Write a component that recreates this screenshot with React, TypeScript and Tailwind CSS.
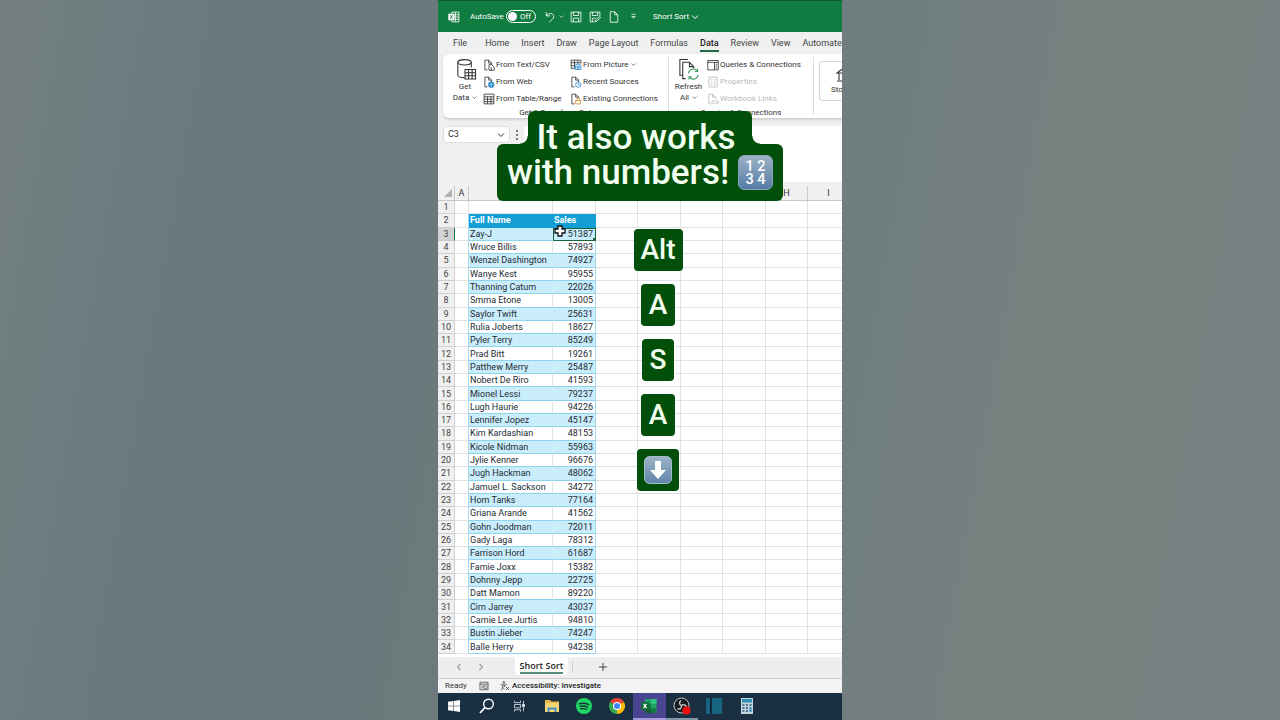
import type { ReactNode } from 'react';
import clsx from 'clsx';

const people: [string, number][] = [
  ['Zay-J', 51387],
  ['Wruce Billis', 57893],
  ['Wenzel Dashington', 74927],
  ['Wanye Kest', 95955],
  ['Thanning Catum', 22026],
  ['Smma Etone', 13005],
  ['Saylor Twift', 25631],
  ['Rulia Joberts', 18627],
  ['Pyler Terry', 85249],
  ['Prad Bitt', 19261],
  ['Patthew Merry', 25487],
  ['Nobert De Riro', 41593],
  ['Mionel Lessi', 79237],
  ['Lugh Haurie', 94226],
  ['Lennifer Jopez', 45147],
  ['Kim Kardashian', 48153],
  ['Kicole Nidman', 55963],
  ['Jylie Kenner', 96676],
  ['Jugh Hackman', 48062],
  ['Jamuel L. Sackson', 34272],
  ['Hom Tanks', 77164],
  ['Griana Arande', 41562],
  ['Gohn Joodman', 72011],
  ['Gady Laga', 78312],
  ['Farrison Hord', 61687],
  ['Famie Joxx', 15382],
  ['Dohnny Jepp', 22725],
  ['Datt Mamon', 89220],
  ['Cim Jarrey', 43037],
  ['Camie Lee Jurtis', 94810],
  ['Bustin Jieber', 74247],
  ['Balle Herry', 94238],
];

const tabs = ['File', 'Home', 'Insert', 'Draw', 'Page Layout', 'Formulas', 'Data', 'Review', 'View', 'Automate'];
const columns = ['A', 'B', 'C', 'D', 'E', 'F', 'G', 'H', 'I'];
const emptyColumns = ['D', 'E', 'F', 'G', 'H', 'I'];

function Svg({ className, box = 16, children }: { className?: string; box?: number; children: ReactNode }) {
  return (
    <svg
      viewBox={`0 0 ${box} ${box}`}
      className={clsx('shrink-0', className)}
      fill="none"
      stroke="currentColor"
      strokeWidth="1.1"
      aria-hidden="true"
    >
      {children}
    </svg>
  );
}

function Chevron({ className }: { className?: string }) {
  return (
    <Svg className={className} box={8}>
      <path d="M1 2.500 4 5.500 7 2.500" strokeWidth="1" />
    </Svg>
  );
}

const page = <path d="M6 14.500H2.500v-13h5l4 4V8M7.500 1.500v4h4" />;

function TextIcon() {
  return (
    <Svg className="size-3">
      {page}
      <path d="M8 7.500h3.500L15 11v4H8zM11 11v4" />
    </Svg>
  );
}

function WebIcon() {
  return (
    <Svg className="size-3">
      {page}
      <circle cx="11" cy="11.500" r="3.800" fill="#2b88c8" stroke="#2b88c8" />
      <path d="M7.500 11.500h7M11 8v7" stroke="#bfe0f5" strokeWidth=".8" />
    </Svg>
  );
}

function TableIcon() {
  return (
    <Svg className="size-3">
      <path d="M1.500 1.500h13v13h-13zM1.500 5h13M1.500 8.300h13M1.500 11.500h13M6 5v9.500M10.500 5v9.500" />
    </Svg>
  );
}

function PictureIcon() {
  return (
    <Svg className="size-3">
      <path d="M6 12.500H1.500v-11h13V6M1.500 5h13M1.500 9H6M6 1.500v11M10.500 1.500V5" />
      <path d="M7 8h1.500l1-1.500h2l1 1.500h2v6H7z" fill="#cbe6f7" stroke="#2b88c8" />
      <circle cx="10.800" cy="11" r="1.400" stroke="#2b88c8" />
    </Svg>
  );
}

function RecentIcon() {
  return (
    <Svg className="size-3">
      {page}
      <circle cx="11" cy="11.500" r="3.600" fill="#fff" stroke="#2b88c8" />
      <path d="M11 9.500v2.300h2" stroke="#2b88c8" />
    </Svg>
  );
}

function ExistingIcon() {
  return (
    <Svg className="size-3">
      {page}
      <path d="M7.500 10h6.500v4.500h-6.500zM9 10V8.500a1.800 1.800 0 0 1 3.600 0V10" fill="#fff" stroke="#c98a2b" />
    </Svg>
  );
}

function QueriesIcon() {
  return (
    <Svg className="size-3">
      <path d="M1 2h14v12.500H1zM1 4.500h14M10 4.500v10" />
      <path d="M11.500 7h2M11.500 9.500h2M11.500 12h2" />
    </Svg>
  );
}

function PropertiesIcon() {
  return (
    <Svg className="size-3">
      <path d="M2.500 1.500h11v13h-11zM5 5h2M5 8h2M5 11h2M9 5h2.500M9 8h2.500M9 11h2.500" />
    </Svg>
  );
}

function LinksIcon() {
  return (
    <Svg className="size-3">
      {page}
      <path d="M10 10H8.500a2 2 0 0 0 0 4H10M12 10h1a2 2 0 0 1 0 4h-1M9.500 12h3" />
    </Svg>
  );
}

function RibbonItem({ icon, disabled, children }: { icon: ReactNode; disabled?: boolean; children: ReactNode }) {
  return (
    <button
      disabled={disabled}
      className="flex h-[17px] items-center gap-px whitespace-nowrap text-left disabled:text-[#b8b8b8]"
    >
      {icon}
      {children}
    </button>
  );
}

function TitleBar() {
  return (
    <header className="flex h-8 items-center border-t border-[#0b5c30] bg-[#107c41] pl-[10px] text-[8px] text-white">
      <Svg className="size-3">
        <path d="M5 3V1.500h9.500v13H5V13M5 5h9.500M5 8h9.500M5 11h9.500M10 1.500v13" />
        <path d="M1 4h7v8H1z" fill="#fff" />
        <path d="m3 5.500 3 5M6 5.500l-3 5" stroke="#107c41" />
      </Svg>
      <label className="ml-[10px] flex w-[66px] items-center justify-between">
        AutoSave
        <input type="checkbox" className="peer sr-only" />
        <span className="flex h-[13px] w-[30px] items-center gap-[3px] rounded-full border border-white pl-px">
          <span className="size-[9px] rounded-full bg-white" />
          Off
        </span>
      </label>
      <button aria-label="Undo" className="ml-2 flex items-center gap-[3px]">
        <Svg className="size-3">
          <path d="M3 1.500v5h5M3 6.500C6 2 13 2.500 13 7.500c0 2.500-3 4.500-6 7.500" />
        </Svg>
        <Chevron className="size-[5px]" />
      </button>
      <button aria-label="Save" className="ml-[6px]">
        <Svg className="size-3">
          <path d="M1.500 1.500h13v13h-13zM4.500 1.500v4.500h7V1.500M4.500 14.500V9.500h7v5" />
        </Svg>
      </button>
      <button aria-label="Save as" className="ml-[7px]">
        <Svg className="size-3">
          <path d="M7 14.500H1.500v-13h13V7M4.500 1.500v4.500h7V1.500M4.500 14.500V9.500H9M8 14.500l1-3 5-4 1.500 1.500-5 4.500z" />
        </Svg>
      </button>
      <button aria-label="New" className="ml-[7px]">
        <Svg className="size-3">
          <path d="M3 1h6l4 4v10H3zM9 1v4h4" />
        </Svg>
      </button>
      <button aria-label="Customize toolbar" className="ml-[10px]">
        <Svg className="size-[7px]" box={8}>
          <path d="M1.500 1.500h5M2 4l2 2 2-2z" strokeWidth=".8" />
        </Svg>
      </button>
      <button className="ml-4 flex items-center gap-[2px]">
        Short Sort
        <Chevron className="size-2" />
      </button>
    </header>
  );
}

function Ribbon() {
  return (
    <section className="ml-[5px] flex h-[65px] rounded-l-md border-b border-[#d0d0d0] bg-white pt-px text-[8px] text-[#333] shadow-sm">
      <div className="flex w-[225px] shrink-0 flex-col">
        <div className="flex pl-[6px] pt-px">
          <button className="flex w-8 flex-col items-center pt-[2px] leading-[11px]">
            <Svg className="size-[23px]" box={24}>
              <path d="M11 20.500c-4 0-7-1-7-2.500V4.500M18 4.500V10" />
              <ellipse cx="11" cy="4.500" rx="7" ry="2.800" />
              <path d="M11.500 12h11v10h-11zM11.500 15.300h11M11.500 18.600h11M15.200 12v10M18.900 12v10" fill="#fff" />
            </Svg>
            Get
            <span className="flex items-center gap-[3px]">
              Data <Chevron className="size-[5px]" />
            </span>
          </button>
          <div className="ml-[2px] w-[87px]">
            <RibbonItem icon={<TextIcon />}>From Text/CSV</RibbonItem>
            <RibbonItem icon={<WebIcon />}>From Web</RibbonItem>
            <RibbonItem icon={<TableIcon />}>From Table/Range</RibbonItem>
          </div>
          <div>
            <RibbonItem icon={<PictureIcon />}>
              From Picture <Chevron className="ml-px size-[5px]" />
            </RibbonItem>
            <RibbonItem icon={<RecentIcon />}>Recent Sources</RibbonItem>
            <RibbonItem icon={<ExistingIcon />}>Existing Connections</RibbonItem>
          </div>
        </div>
        <p className="pl-1 text-center leading-[12px]">Get &amp; Transform Data</p>
      </div>
      <div className="mb-[3px] mt-[2px] w-[146px] shrink-0 border-x border-[#dcdcdc]">
        <div className="-mt-px flex pl-[3px]">
          <button className="flex w-[33px] flex-col items-center pt-[2px] leading-[11px]">
            <Svg className="size-[23px]" box={24}>
              <path d="M6 18H3V1.500h8.500M9 21.500H6v-17h7l4.500 4.500v2M13 4.500V9h4.500" />
              <path d="M12 16a5 5 0 0 1 9-2.500M21.500 11v3h-3M22 17.500a5 5 0 0 1-9 2.500M12.500 22.500v-3h3" stroke="#3f9b63" />
            </Svg>
            Refresh
            <span className="flex items-center gap-[3px]">
              All <Chevron className="size-[5px]" />
            </span>
          </button>
          <div className="ml-[2px]">
            <RibbonItem icon={<QueriesIcon />}>Queries &amp; Connections</RibbonItem>
            <RibbonItem icon={<PropertiesIcon />} disabled>
              Properties
            </RibbonItem>
            <RibbonItem icon={<LinksIcon />} disabled>
              Workbook Links
            </RibbonItem>
          </div>
        </div>
        <p className="text-center leading-[12px]">Queries &amp; Connections</p>
      </div>
      <button className="mb-[17px] ml-[5px] mt-[6px] flex w-12 shrink-0 flex-col items-center justify-center gap-px rounded-[3px] border border-[#d5d5d5] leading-[11px]">
        <Svg className="size-4">
          <path d="M2 6 8 1.500 14 6zM4 6v7M8 6v7M12 6v7M2 14h12" />
        </Svg>
        Stocks
      </button>
    </section>
  );
}

function FormulaBar() {
  return (
    <div className="flex h-[67px] items-start pb-1 pl-[5px] pt-[7px] text-[8px]">
      <label className="flex h-[17px] w-[67px] items-center rounded-sm border border-[#dedede] bg-white px-1 text-[#333]">
        <input aria-label="Name box" defaultValue="C3" className="w-full min-w-0 bg-transparent text-[9px] outline-none" />
        <Chevron className="size-2" />
      </label>
      <span className="ml-[6px] flex h-[17px] flex-col justify-center gap-[2px]">
        <i className="size-[2px] rounded-full bg-[#555]" />
        <i className="size-[2px] rounded-full bg-[#555]" />
        <i className="size-[2px] rounded-full bg-[#555]" />
      </span>
      <input aria-label="Formula" className="ml-[6px] h-full min-w-0 flex-1 bg-white outline-none" />
    </div>
  );
}

function Sheet() {
  return (
    <div className="relative overflow-hidden bg-white pb-[3px]">
      <table className="h-[468px] w-[412px] table-fixed border-separate border-spacing-0 text-[9px] leading-[12px] text-[#1d2b33]">
        <colgroup>
          <col className="w-[17px]" />
          <col className="w-[14px]" />
          <col className="w-[84px]" />
          <col className="w-[43px]" />
          <col className="w-[42px]" />
          <col className="w-[43px]" />
          <col className="w-[42px]" />
          <col className="w-[43px]" />
          <col className="w-[42px]" />
          <col className="w-[42px]" />
        </colgroup>
        <thead className="text-[#333]">
          <tr className="h-[15px] bg-[#f0f0f0]">
            <td className="border-b border-r border-[#c8c8c8] p-0">
              <svg viewBox="0 0 8 8" className="ml-auto mr-[2px] size-2" aria-hidden="true">
                <path d="M8 0v8H0z" fill="#b0b0b0" />
              </svg>
            </td>
            {columns.map((c) => (
              <th key={c} scope="col" className="border-b border-r border-[#c8c8c8] p-0 font-normal">
                {c}
              </th>
            ))}
          </tr>
        </thead>
        <tbody>
          {Array.from({ length: 34 }, (_, i) => {
            const row = i + 1;
            const person = people[row - 3];
            const banded = row % 2 === 1;
            return (
              <tr key={row}>
                <th
                  scope="row"
                  className={clsx(
                    'border-b border-r p-0 font-normal text-[#444]',
                    row === 3 ? 'border-r-[#107c41] border-b-[#c8c8c8] bg-[#d2d2d2]' : 'border-[#d0d0d0] bg-[#f0f0f0]',
                  )}
                >
                  {row}
                </th>
                <td className={clsx('border-b border-r border-[#e1e1e1] p-0', row > 1 && 'border-r-[#a6daf0]')} />
                {row === 1 && (
                  <>
                    <td className="border-b border-r border-[#e1e1e1] p-0" />
                    <td className="border-b border-r border-[#e1e1e1] p-0" />
                  </>
                )}
                {row === 2 && (
                  <>
                    <th scope="col" className="border-b border-[#159ed6] bg-[#159ed6] p-0 pl-px text-left font-bold text-white">
                      Full Name
                    </th>
                    <th scope="col" className="border-b border-[#159ed6] bg-[#159ed6] p-0 pl-px text-left font-bold text-white">
                      Sales
                    </th>
                  </>
                )}
                {person && (
                  <>
                    <td
                      className={clsx(
                        'whitespace-nowrap border-b border-r border-b-[#8fd3ee] p-0 pl-px',
                        banded ? 'border-r-[#caedfb] bg-[#caedfb]' : 'border-r-[#dfe6ea]',
                      )}
                    >
                      {person[0]}
                    </td>
                    <td
                      className={clsx(
                        'border-b border-r border-b-[#8fd3ee] border-r-[#a6daf0] p-0 pr-[2px] text-right',
                        banded && 'bg-[#caedfb]',
                        row === 3 && 'outline outline-1 -outline-offset-1 outline-[#17633a]',
                      )}
                    >
                      {person[1]}
                    </td>
                  </>
                )}
                {emptyColumns.map((c) => (
                  <td key={c} className="border-b border-r border-[#e1e1e1] p-0" />
                ))}
              </tr>
            );
          })}
        </tbody>
      </table>

      {/* fill handle */}
      <i className="absolute left-[155px] top-[52px] size-[3px] bg-[#17633a]" />
      {/* cell cursor */}
      <svg viewBox="0 0 12 12" className="absolute left-[116px] top-[39px] size-3" aria-hidden="true">
        <path d="M4 1h4v3h3v4H8v3H4V8H1V4h3z" fill="#fff" stroke="#111" strokeWidth="1.300" />
      </svg>
      <KeySequence />
    </div>
  );
}

const keyClass =
  'flex h-[42px] items-center justify-center rounded-[4px] bg-[#024f0a] pb-px font-[inherit] text-[28px] font-medium leading-none text-[#f2fff0]';

function KeySequence() {
  return (
    <div className="absolute left-[195px] top-[43px] flex w-[50px] flex-col items-center gap-[13px]">
      <kbd className={clsx(keyClass, 'w-[49px]')}>Alt</kbd>
      <kbd className={clsx(keyClass, 'w-[34px]')}>A</kbd>
      <kbd className={clsx(keyClass, 'w-8')}>S</kbd>
      <kbd className={clsx(keyClass, 'w-[34px]')}>A</kbd>
      <kbd className={clsx(keyClass, 'w-[42px]')}>
        <svg viewBox="0 0 28 28" className="size-7" aria-label="Down arrow">
          <defs>
            <linearGradient id="key" x1="0" y1="0" x2="0" y2="1">
              <stop offset="0" stopColor="#9db3c7" />
              <stop offset="1" stopColor="#5f84a8" />
            </linearGradient>
          </defs>
          <rect x=".5" y=".5" width="27" height="27" rx="5" fill="url(#key)" stroke="#a9bccb" />
          <path d="M11 5h6v9h5l-8 9-8-9h5z" fill="#fff" />
        </svg>
      </kbd>
    </div>
  );
}

function Caption() {
  return (
    <h1 className="absolute left-[59px] top-[111px] flex w-[286px] flex-col items-center text-[35px] font-medium leading-[35px] text-[#f2fff0]">
      <span className="flex items-end">
        <i className="size-2 bg-[radial-gradient(circle_at_0_0,transparent_7px,#024f0a_8px)]" />
        <span className="h-[33px] w-[224px] whitespace-nowrap rounded-t-md bg-[#024f0a] pr-2 pt-[9px] text-center">
          <span className="relative">It also works</span>
        </span>
        <i className="size-2 bg-[radial-gradient(circle_at_100%_0,transparent_7px,#024f0a_8px)]" />
      </span>
      <span className="flex h-[57px] w-full items-center justify-between whitespace-nowrap rounded-md bg-[#024f0a] px-[10px]">
        with numbers!
        <svg viewBox="0 0 36 36" className="size-[35px]" aria-label="1234">
          <defs>
            <linearGradient id="numbers" x1="0" y1="0" x2="0" y2="1">
              <stop offset="0" stopColor="#9db3c7" />
              <stop offset="1" stopColor="#557ca5" />
            </linearGradient>
          </defs>
          <rect x=".5" y=".5" width="35" height="35" rx="6" fill="url(#numbers)" stroke="#8ba5bd" />
          <g fill="#fff" fontSize="15" textAnchor="middle">
            <text x="12" y="16">1</text>
            <text x="24" y="16">2</text>
            <text x="12" y="30">3</text>
            <text x="24" y="30">4</text>
          </g>
        </svg>
      </span>
    </h1>
  );
}

function SheetTabs() {
  return (
    <nav className="flex h-[22px] items-start border-b border-[#d0d0d0] bg-[#eeeeee] pl-[17px] text-[#999]">
      <button aria-label="Previous sheet" className="mt-[6px]">
        <Svg className="size-2" box={8}>
          <path d="M5.500 1 2.500 4l3 3" />
        </Svg>
      </button>
      <button aria-label="Next sheet" className="ml-[14px] mt-[6px]">
        <Svg className="size-2" box={8}>
          <path d="M2.500 1l3 3-3 3" />
        </Svg>
      </button>
      <button className="ml-[30px] flex h-[18px] w-[53px] justify-center rounded-b bg-white font-['Open_Sans','Noto_Sans',sans-serif] text-[9px] font-semibold text-[#222]">
        <span className="h-[17px] border-b-2 border-[#5b8f75] leading-[17px]">Short Sort</span>
      </button>
      <span className="ml-1 mt-1 h-3 border-l border-[#ccc]" />
      <button aria-label="New sheet" className="ml-[26px] mt-[6px] text-[#444]">
        <Svg className="size-2" box={8}>
          <path d="M4 0v8M0 4h8" strokeWidth="1" />
        </Svg>
      </button>
    </nav>
  );
}

function StatusBar() {
  return (
    <footer className="flex h-[14px] items-center bg-[#f3f3f3] pl-[7px] text-[8px] text-[#333]">
      <span className="w-[34px]">Ready</span>
      <Svg className="size-[10px]">
        <path d="M1.500 2h13v12h-13zM1.500 5h13M4 8h4M4 11h3" />
        <circle cx="10.500" cy="10" r="2.500" />
      </Svg>
      <button className="ml-[11px] flex items-center gap-[2px] whitespace-nowrap font-medium text-[#222]">
        <Svg className="size-[10px]">
          <circle cx="6" cy="2.500" r="1.500" />
          <path d="M1 5.500l3.500 1v3L2.500 15M11 5.500l-3.500 1v3M4.500 6.500h3M4.500 10 7 13M9.500 9.500l5 5M14.500 9.500l-5 5" />
        </Svg>
        Accessibility: Investigate
      </button>
    </footer>
  );
}

function TaskButton({ label, className, children }: { label: string; className?: string; children: ReactNode }) {
  return (
    <button
      aria-label={label}
      className={clsx('flex h-full flex-1 items-center justify-center border-b-2', className ?? 'border-transparent')}
    >
      {children}
    </button>
  );
}

function Taskbar() {
  return (
    <div className="h-[27px] bg-[#1b2f42] pr-[79px]">
      <div className="flex h-full">
        <TaskButton label="Start">
          <svg viewBox="0 0 12 12" className="size-3" fill="#fff">
            <path d="M0 1.700 5.500 1v4.700H0zM6 .9 12 0v5.700H6zM0 6.300h5.500V11L0 10.300zM6 6.300h6V12l-6-.9z" />
          </svg>
        </TaskButton>
        <TaskButton label="Search">
          <Svg className="size-4 text-white">
            <circle cx="9.500" cy="6" r="4.800" strokeWidth="1.400" />
            <path d="M6 9.500 1 15" strokeWidth="1.800" />
          </Svg>
        </TaskButton>
        <TaskButton label="Task view">
          <Svg className="size-3 text-[#dde4ea]">
            <path d="M2 1v2.500h8V1M2 6h8v4.500H2zM2 15.500V13h8v2.500M14 1v14" />
            <path d="M12.500 6h3v2.500h-3z" fill="currentColor" />
          </Svg>
        </TaskButton>
        <TaskButton label="File Explorer">
          <svg viewBox="0 0 16 16" className="size-4">
            <path d="M1 2h5l1.500 1.500H15V14H1z" fill="#e9b545" />
            <path d="M1 5h14v9H1z" fill="#fad775" />
            <path d="M3.500 14V9.500h9V14h-2v-2.500h-5V14z" fill="#3f92c4" />
          </svg>
        </TaskButton>
        <TaskButton label="Spotify">
          <svg viewBox="0 0 16 16" className="size-4" fill="none" stroke="#14303a" strokeLinecap="round">
            <circle cx="8" cy="8" r="8" fill="#1ed760" stroke="none" />
            <path d="M3.500 5.800c3-.9 6.500-.6 9 .8" strokeWidth="1.600" />
            <path d="M4 8.400c2.600-.7 5.500-.4 7.600.8" strokeWidth="1.300" />
            <path d="M4.500 10.900c2.200-.5 4.400-.3 6.200.7" strokeWidth="1.100" />
          </svg>
        </TaskButton>
        <TaskButton label="Chrome">
          <svg viewBox="0 0 16 16" className="size-4">
            <path d="M8 8 1.070 4A8 8 0 0 1 14.930 4z" fill="#ea4335" />
            <path d="M8 8V16A8 8 0 0 1 1.070 4z" fill="#34a853" />
            <path d="M8 8l6.930-4A8 8 0 0 1 8 16z" fill="#fbbc05" />
            <circle cx="8" cy="8" r="4" fill="#fff" />
            <circle cx="8" cy="8" r="3" fill="#4285f4" />
          </svg>
        </TaskButton>
        <TaskButton label="Excel" className="border-[#a79be0] bg-[#4a4590]">
          <svg viewBox="0 0 16 16" className="size-4">
            <path d="M4 1h11.500v14H4z" fill="#21a366" />
            <path d="M10 1h5.500v4.700H10z" fill="#33c481" />
            <path d="M4 5.700h6v4.600H4zM10 10.300h5.500V15H10z" fill="#107c41" />
            <path d="M4 10.300h6V15H4z" fill="#185c37" />
            <path d="M0 4h8v8H0z" fill="#0e6b38" />
            <path d="m2.500 5.800 3 4.400M5.500 5.800l-3 4.400" stroke="#fff" strokeWidth="1.200" />
          </svg>
        </TaskButton>
        <TaskButton label="OBS" className="border-[#8296a8]">
          <svg viewBox="0 0 18 18" className="size-[18px]">
            <circle cx="8.500" cy="8.500" r="7.500" fill="#191c20" stroke="#c9cdd0" />
            <path
              d="M8.500 8.500C6 7.800 6 5 8 3.500M8.500 8.500c2-1.800 4.500-.6 4.800 1.500M8.500 8.500c.5 2.600-1.800 4.200-4 3.200"
              fill="none"
              stroke="#c9cdd0"
              strokeWidth="1.400"
            />
            <circle cx="13.500" cy="13.500" r="4" fill="#f00d0d" />
          </svg>
        </TaskButton>
        <TaskButton label="Reader">
          <svg viewBox="0 0 16 16" className="size-4">
            <path d="M0 0h4v16H0zM5.500 0H16v16H5.500z" fill="#176580" />
            <path d="M4 0h1.500v16H4z" fill="#0b1d2b" />
          </svg>
        </TaskButton>
        <TaskButton label="Calculator">
          <svg viewBox="0 0 12 16" className="h-4 w-3">
            <path d="M0 0h12v16H0z" fill="#c3d4de" />
            <path d="M1 1h10v3.500H1z" fill="#2d8fb0" />
            <path
              d="M1.500 6h2v2h-2zM5 6h2v2H5zM8.500 6h2v2h-2zM1.500 9h2v2h-2zM5 9h2v2H5zM1.500 12h2v2h-2zM5 12h2v2H5z"
              fill="#50748a"
            />
            <path d="M8.500 9h2v5h-2z" fill="#2d8fb0" />
          </svg>
        </TaskButton>
      </div>
    </div>
  );
}

export default function App() {
  return (
    <div className="flex min-h-screen justify-center bg-[linear-gradient(100deg,#748080_0%,#69787f_18%,#6b797c_34%,#717e7f_66%,#77817f_82%,#758081_100%)] font-['Roboto','Noto_Sans',sans-serif]">
      <main className="relative w-full max-w-[404px] overflow-hidden bg-[#f0f0f0]">
        <TitleBar />
        <nav className="flex h-[22px] items-center gap-3 whitespace-nowrap pl-[15px] pt-[2px] text-[9px] text-[#444]">
          {tabs.map((tab) => (
            <button
              key={tab}
              className={clsx(
                'border-b-2 leading-[13px] first:mr-[6px]',
                tab === 'Data' ? 'border-[#1e6b45] font-medium text-[#222]' : 'border-transparent',
              )}
            >
              {tab}
            </button>
          ))}
        </nav>
        <Ribbon />
        <FormulaBar />
        <Sheet />
        <SheetTabs />
        <StatusBar />
        <Taskbar />
        <Caption />
      </main>
    </div>
  );
}
